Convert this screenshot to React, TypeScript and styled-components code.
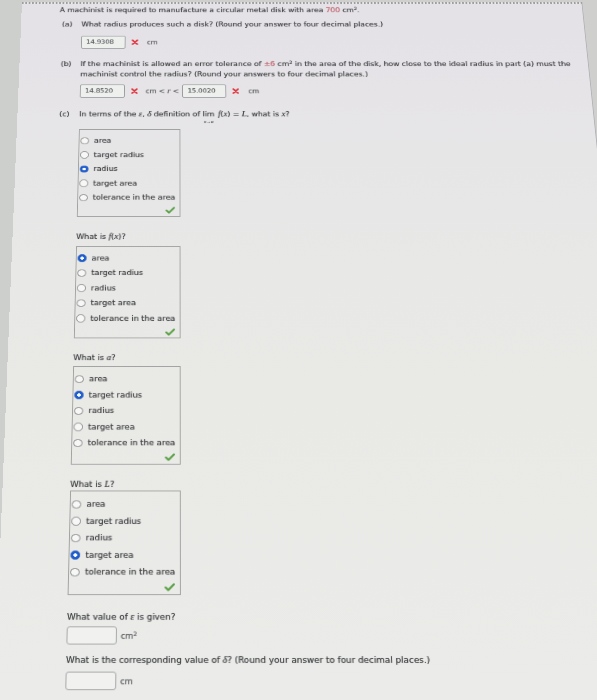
import React from "react";
import styled, { createGlobalStyle } from "styled-components";

const Global = createGlobalStyle`
  html, body { margin: 0; padding: 0; overflow: hidden; background: #cdcfcc; }
  #root { width: 597px; height: 700px; overflow: hidden; }
`;

/* The whole sheet is tilted like the photographed screen */
const Stage = styled.div`
  width: 690px;
  height: 840px;
  margin-left: -6px;
  display: flex;
  background: #cfd0cd;
  transform-origin: 182px 100%;
  transform: translateY(-140px) perspective(801px) rotateX(10deg);
`;

const Page = styled.div`
  width: 662px;
  margin-top: 3px;
  padding-top: 2px;
  border-top: 2px dotted #8e8e94;
  border-right: 1px solid #b3b3b8;
  background: linear-gradient(180deg, #e4e1e7 0%, #e7e6e7 25%, #e9eae6 60%, #ebece9 100%);
  padding-left: 45px;
  font-family: "DejaVu Sans", Verdana, sans-serif;
  font-size: 8.9px;
  color: #3f4143;
  text-shadow: 0 0 0.7px rgba(60, 62, 64, 0.6);
  box-sizing: border-box;
`;

const Line = styled.div<{ $mt?: number }>`
  line-height: 14px;
  height: 14px;
  white-space: nowrap;
  margin-top: ${(p) => p.$mt ?? 0}px;
`;

const Red = styled.span`
  color: #e06a76;
`;

const Sup = styled.sup`
  font-size: 6px;
  line-height: 0;
  vertical-align: 3.5px;
`;

const M = styled.span`
  font-family: "Liberation Serif", "Times New Roman", serif;
  font-style: italic;
  font-size: 10px;
`;

const Part = styled.div<{ $mt: number }>`
  display: flex;
  margin-top: ${(p) => p.$mt}px;
  padding-left: 3px;
`;

const PartLabel = styled.div`
  width: 23px;
  flex: none;
  line-height: 14px;
`;

const PartBody = styled.div`
  display: flex;
  flex-direction: column;
  align-items: flex-start;
`;

const AnswerRow = styled.div<{ $mt: number }>`
  display: flex;
  align-items: center;
  height: 18px;
  margin-top: ${(p) => p.$mt}px;
`;

const Input = styled.div<{ $w?: number; $ml?: number }>`
  width: ${(p) => p.$w ?? 52}px;
  margin-left: ${(p) => p.$ml ?? 0}px;
  height: 18px;
  box-sizing: border-box;
  border: 1px solid #9b9e9f;
  border-radius: 2px;
  background: #eef0ee;
  font-size: 7.8px;
  color: #5f6164;
  line-height: 16px;
  padding-left: 5px;
  flex: none;
`;

const Blank = styled(Input)`
  height: 19px;
  border-color: #a7a9aa;
  border-radius: 3px;
  background: #f1f2f0;
`;

const Unit = styled.span<{ $ml: number }>`
  margin-left: ${(p) => p.$ml}px;
  color: #5f6164;
  font-size: 8.3px;
  white-space: nowrap;
`;

const XBox = styled.svg`
  width: 8px;
  height: 8px;
  margin-left: 7px;
  flex: none;
`;

const XMark = () => (
  <XBox viewBox="0 0 8 8">
    <path d="M1.3 1.3 L6.7 6.7 M6.7 1.3 L1.3 6.7" stroke="#e0303b" strokeWidth="2.1" strokeLinecap="round" />
  </XBox>
);

const LimStack = styled.span`
  display: inline-flex;
  flex-direction: column;
  align-items: center;
  height: 14px;
  vertical-align: top;
  margin: 0 4px 0 3px;
`;

const LimSub = styled.span`
  font-size: 5.5px;
  line-height: 6px;
  font-family: "Liberation Serif", serif;
  font-style: italic;
`;

const Choices = styled.div<{ $mt: number }>`
  width: 116px;
  box-sizing: border-box;
  border: 1px solid #a1a3a1;
  padding: 5px 5px 0 1px;
  margin-top: ${(p) => p.$mt}px;
  display: flex;
  flex-direction: column;
`;

const Choice = styled.div`
  display: flex;
  align-items: center;
  height: 18.5px;
  gap: 6px;
  white-space: nowrap;
`;

const Radio = styled.span<{ $on?: boolean }>`
  width: 9.5px;
  height: 9.5px;
  border-radius: 50%;
  box-sizing: border-box;
  flex: none;
  border: 1px solid ${(p) => (p.$on ? "#1b4fb0" : "#878a8b")};
  background: ${(p) =>
    p.$on ? "radial-gradient(circle, #ffffff 0 1.6px, #1d5fd6 2.1px)" : "#f7f7f6"};
`;

const CheckRow = styled.div`
  height: 14px;
  display: flex;
  align-items: center;
  justify-content: flex-end;
`;

const CheckSvg = styled.svg`
  width: 11px;
  height: 9px;
`;

const Check = () => (
  <CheckSvg viewBox="0 0 11 9">
    <path d="M1.3 4.8 L4.2 7.6 L9.8 1.4" fill="none" stroke="#5aa046" strokeWidth="2.2" strokeLinecap="round" strokeLinejoin="round" />
  </CheckSvg>
);

const OPTIONS = ["area", "target radius", "radius", "target area", "tolerance in the area"];

const ChoiceBox = ({ selected, mt }: { selected: number; mt: number }) => (
  <Choices $mt={mt}>
    {OPTIONS.map((o, i) => (
      <Choice key={o}>
        <Radio $on={i === selected} />
        <span>{o}</span>
      </Choice>
    ))}
    <CheckRow>
      <Check />
    </CheckRow>
  </Choices>
);

const AnswerLine = styled.div<{ $mt: number }>`
  display: flex;
  align-items: center;
  margin-top: ${(p) => p.$mt}px;
`;

export default function App() {
  return (
    <>
      <Global />
      <Stage>
        <Page>
          <Line>
            A machinist is required to manufacture a circular metal disk with area <Red>700</Red> cm<Sup>2</Sup>.
          </Line>

          <Part $mt={6}>
            <PartLabel>(a)</PartLabel>
            <PartBody>
              <Line>What radius produces such a disk? (Round your answer to four decimal places.)</Line>
              <AnswerRow $mt={8.5}>
                <Input>14.9308</Input>
                <XMark />
                <Unit $ml={10}>cm</Unit>
              </AnswerRow>
            </PartBody>
          </Part>

          <Part $mt={14}>
            <PartLabel>(b)</PartLabel>
            <PartBody>
              <Line>
                If the machinist is allowed an error tolerance of <Red>±6</Red> cm<Sup>2</Sup> in the area of the disk, how close to the ideal radius in part (a) must the
              </Line>
              <Line>machinist control the radius? (Round your answers to four decimal places.)</Line>
              <AnswerRow $mt={7}>
                <Input>14.8520</Input>
                <XMark />
                <Unit $ml={9}>
                  cm &lt; <M>r</M> &lt;
                </Unit>
                <Input $w={51} $ml={4}>15.0020</Input>
                <XMark />
                <Unit $ml={10}>cm</Unit>
              </AnswerRow>
            </PartBody>
          </Part>

          <Part $mt={15.5}>
            <PartLabel>(c)</PartLabel>
            <PartBody>
              <Line>
                In terms of the <M>ε</M>, <M>δ</M> definition of
                <LimStack>
                  <span>lim</span>
                  <LimSub>x→a</LimSub>
                </LimStack>
                <M>f</M>(<M>x</M>) = <M>L</M>, what is <M>x</M>?
              </Line>
              <ChoiceBox selected={2} mt={13} />

              <Line $mt={18.5}>
                What is <M>f</M>(<M>x</M>)?
              </Line>
              <ChoiceBox selected={0} mt={4.5} />

              <Line $mt={16}>
                What is <M>a</M>?
              </Line>
              <ChoiceBox selected={1} mt={3} />

              <Line $mt={15}>
                What is <M>L</M>?
              </Line>
              <ChoiceBox selected={3} mt={0.5} />

              <Line $mt={16}>
                What value of <M>ε</M> is given?
              </Line>
              <AnswerLine $mt={3.5}>
                <Blank $w={51} />
                <Unit $ml={4}>
                  cm<Sup>2</Sup>
                </Unit>
              </AnswerLine>

              <Line $mt={9}>
                What is the corresponding value of <M>δ</M>? (Round your answer to four decimal places.)
              </Line>
              <AnswerLine $mt={5}>
                <Blank $w={51} />
                <Unit $ml={4}>cm</Unit>
              </AnswerLine>
            </PartBody>
          </Part>
        </Page>
      </Stage>
    </>
  );
}
